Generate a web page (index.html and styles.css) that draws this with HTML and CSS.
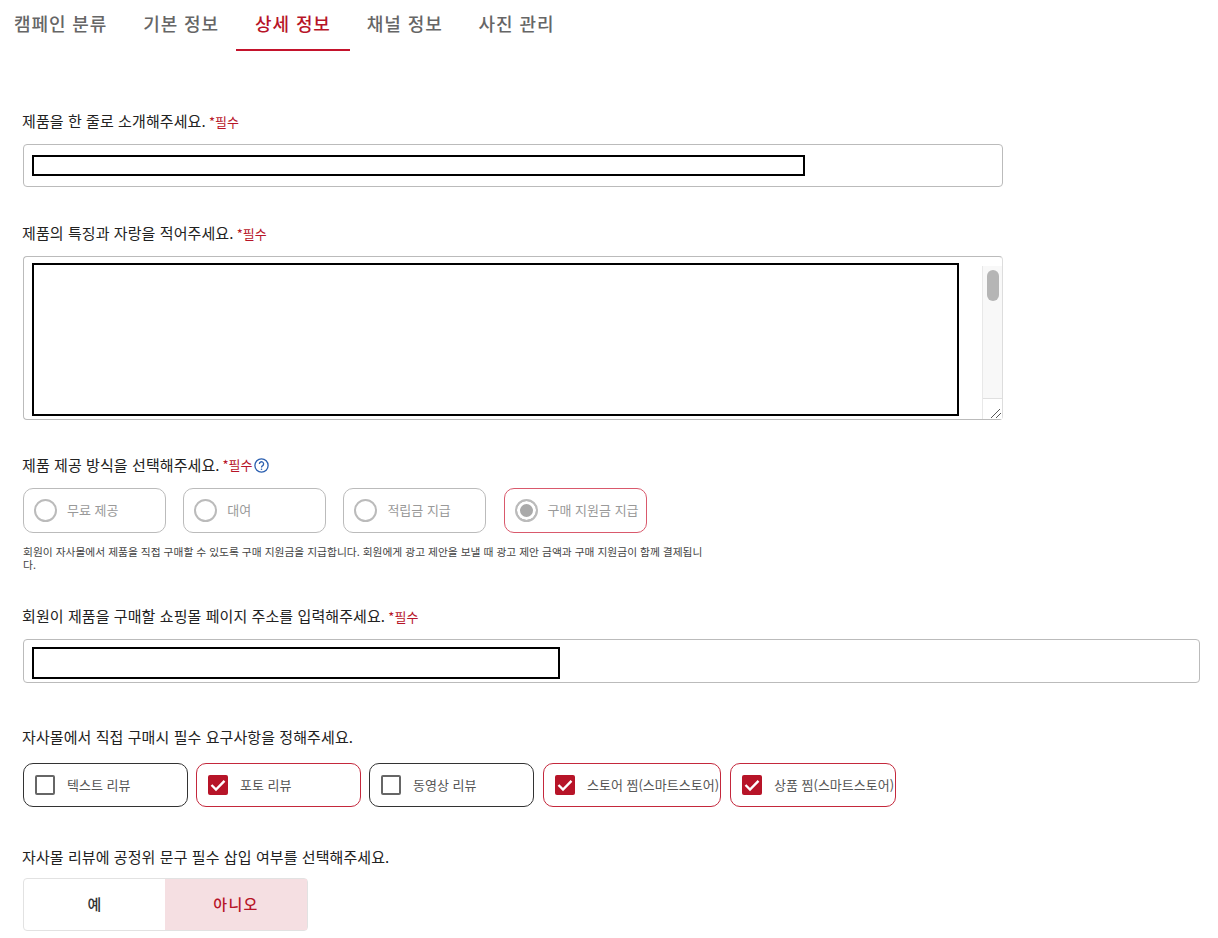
FILE: index.html
```html
<!DOCTYPE html>
<html lang="ko">
<head>
<meta charset="utf-8" />
<title>상세 정보</title>
<link rel="stylesheet" href="styles.css">
</head>
<body>
<div class="tabs">
  <a class="tab">캠페인 분류</a>
  <a class="tab">기본 정보</a>
  <a class="tab on">상세 정보</a>
  <a class="tab">채널 정보</a>
  <a class="tab">사진 관리</a>
</div>
<div class="form">
  <div class="label first">제품을 한 줄로 소개해주세요. <span class="req">*필수</span></div>
  <div class="input w980"><div class="mask m1"></div></div>

  <div class="label l2">제품의 특징과 자랑을 적어주세요. <span class="req">*필수</span></div>
  <div class="area">
    <div class="mask m2"></div>
    <div class="sbar">
      <div class="track"><div class="thumb"></div></div>
      <div class="grip">
        <svg width="12" height="12" viewBox="0 0 12 12"><path d="M1 11 10 2M6 11 11 6" stroke="#555" stroke-width="1" fill="none"/></svg>
      </div>
    </div>
  </div>

  <div class="label l3">제품 제공 방식을 선택해주세요. <span class="req">*필수</span>
    <svg class="help" width="15" height="15" viewBox="0 0 15 15"><circle cx="7.5" cy="7.5" r="6.6" fill="none" stroke="#2b5fb0" stroke-width="1.3"/><path d="M5.4 5.9a2.1 2.1 0 1 1 3.3 1.7c-.8.5-1.2.9-1.2 1.8" fill="none" stroke="#2b5fb0" stroke-width="1.3"/><circle cx="7.5" cy="11.2" r=".8" fill="#2b5fb0"/></svg>
  </div>
  <div class="radios">
    <div class="radio"><span class="dot"></span>무료 제공</div>
    <div class="radio"><span class="dot"></span>대여</div>
    <div class="radio"><span class="dot"></span>적립금 지급</div>
    <div class="radio on"><span class="dot"></span>구매 지원금 지급</div>
  </div>
  <p class="note">회원이 자사몰에서 제품을 직접 구매할 수 있도록 구매 지원금을 지급합니다. 회원에게 광고 제안을 보낼 때 광고 제안 금액과 구매 지원금이 함께 결제됩니다.</p>

  <div class="label l4">회원이 제품을 구매할 쇼핑몰 페이지 주소를 입력해주세요. <span class="req">*필수</span></div>
  <div class="input w1177"><div class="mask m3"></div></div>

  <div class="label l5">자사몰에서 직접 구매시 필수 요구사항을 정해주세요.</div>
  <div class="checks">
    <div class="check c1"><span class="box"></span><span class="txt">텍스트 리뷰</span></div>
    <div class="check c1 on"><span class="box"><svg width="20" height="20" viewBox="0 0 20 20"><path d="M3.5 10 8 14.5 16.5 5.8" fill="none" stroke="#fff" stroke-width="2.4"/></svg></span><span class="txt">포토 리뷰</span></div>
    <div class="check c1"><span class="box"></span><span class="txt">동영상 리뷰</span></div>
    <div class="check c2 on"><span class="box"><svg width="20" height="20" viewBox="0 0 20 20"><path d="M3.5 10 8 14.5 16.5 5.8" fill="none" stroke="#fff" stroke-width="2.4"/></svg></span><span class="txt">스토어 찜(스마트스토어)</span></div>
    <div class="check c3 on"><span class="box"><svg width="20" height="20" viewBox="0 0 20 20"><path d="M3.5 10 8 14.5 16.5 5.8" fill="none" stroke="#fff" stroke-width="2.4"/></svg></span><span class="txt">상품 찜(스마트스토어)</span></div>
  </div>

  <div class="label l6">자사몰 리뷰에 공정위 문구 필수 삽입 여부를 선택해주세요.</div>
  <div class="toggle">
    <div class="opt">예</div>
    <div class="opt on">아니오</div>
  </div>
</div>
</body>
</html>
```

FILE: styles.css
```css
*{box-sizing:border-box;}
html,body{height:938px;overflow:hidden;}
body{margin:0;background:#fff;color:#222;font-family:"Noto Sans CJK KR","Noto Sans",sans-serif;}

.tabs{display:flex;height:51px;margin-left:-4px;}
.tab{padding:11px 18px 0 18px;font-size:18px;line-height:24px;font-weight:500;letter-spacing:.9px;color:#666;border-bottom:2px solid transparent;}
.tab.on{margin:0 -1px;padding:11px 19px 0 19px;color:#b71428;border-bottom-color:#c4132c;}

.form{padding-left:23px;}
.label{margin-left:-1px;font-size:15px;line-height:20px;letter-spacing:.08px;color:#222;}
.req{margin-left:-1px;font-size:13px;letter-spacing:0;color:#b71428;}
.first{margin-top:60px;}
.l2{margin-top:36px;}
.l3{margin-top:35px;display:flex;align-items:center;gap:4px;}
.l3 .help{margin-left:-3px;}
.l4{margin-top:35px;}
.l5{margin-top:44px;}
.l6{margin-top:40px;}

.input{display:flex;align-items:center;padding-left:8px;border:1px solid #bbb;border-radius:4px;}
.w980{width:980px;height:43px;margin-top:12px;}
.w1177{width:1177px;height:44px;margin-top:12px;}
.mask{border:2px solid #000;background:#fff;}
.m1{width:773px;height:21px;}
.m2{width:927px;height:153px;margin:6px 0 0 8px;}
.m3{width:528px;height:32px;margin-top:3px;}

.area{display:flex;justify-content:space-between;width:980px;height:164px;margin-top:12px;border:1px solid #bbb;border-right-color:#ddd;border-radius:4px;}
.sbar{display:flex;flex-direction:column;width:20px;margin-top:9px;background:#f8f8f8;border-left:1px solid #e8e8e8;}
.track{flex:1;padding:4px 3px 0 4px;}
.thumb{height:31px;border-radius:6px;background:#b5b5b5;}
.grip{display:flex;align-items:flex-end;justify-content:flex-end;height:21px;background:#fff;border-top:1px solid #e0e0e0;}

.radios{display:flex;gap:17.2px;margin-top:13px;}
.radio{display:flex;align-items:center;gap:10px;width:143px;height:45px;padding:0 0 2px 10px;border:1px solid #bbb;border-radius:10px;font-size:13px;color:#999;}
.radio.on{border-color:#d9596c;}
.dot{width:23px;height:23px;margin-top:2px;border:2px solid #bbb;border-radius:50%;background:#fff;}
.radio.on .dot{background:#aaa;box-shadow:inset 0 0 0 3px #fff;}
.note{width:684px;margin:12px 0 0 0;font-size:10.75px;line-height:13px;color:#444;}

.checks{display:flex;margin-top:16px;}
.check{display:flex;align-items:center;gap:12px;height:44px;margin-right:8px;padding-left:11px;border:1px solid #333;border-radius:10px;font-size:13px;color:#555;white-space:nowrap;}
.check.on{border-color:#c4283c;}
.txt{margin-bottom:2px;}
.c1{width:165px;}
.c2{width:178px;margin-left:1px;}
.c3{width:166px;margin-left:1px;}
.box{width:20px;height:20px;border:2.5px solid #666;border-radius:2px;background:#fff;}
.check.on .box{border:0;background:#b71428;}
.box svg{display:block;}

.toggle{display:flex;width:285px;height:53px;margin-top:11px;border:1px solid #e2e2e2;border-radius:4px;}
.opt{flex:none;width:141px;display:flex;align-items:center;justify-content:center;padding-bottom:3px;font-size:15px;font-weight:500;color:#333;}
.opt.on{width:142px;background:#f5dfe2;color:#b71428;letter-spacing:1.3px;}
```
